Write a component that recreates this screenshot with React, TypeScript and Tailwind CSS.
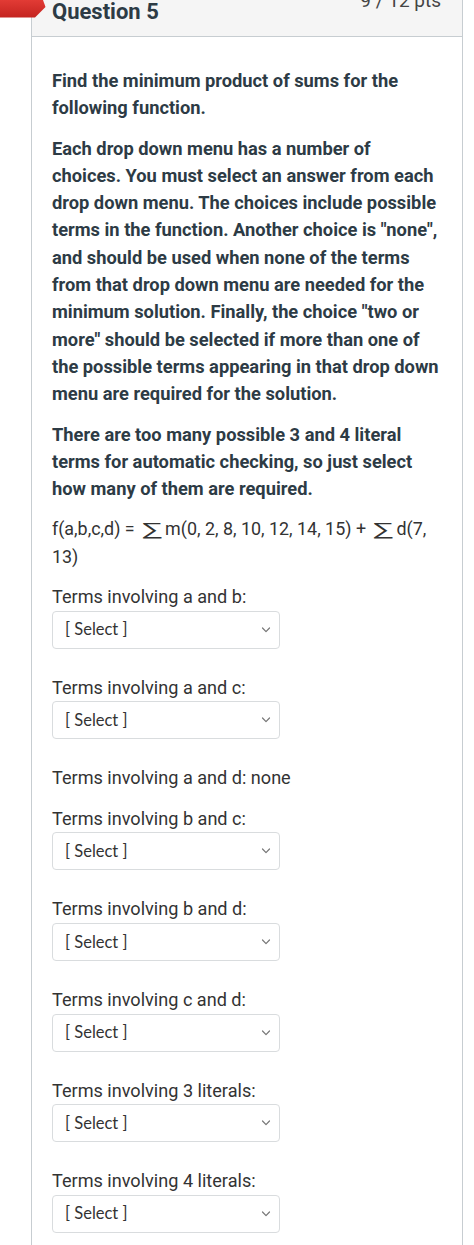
import React from 'react'

const TERMS: { label: string; none?: boolean }[] = [
  { label: 'Terms involving a and b:' },
  { label: 'Terms involving a and c:' },
  { label: 'Terms involving a and d: none', none: true },
  { label: 'Terms involving b and c:' },
  { label: 'Terms involving b and d:' },
  { label: 'Terms involving c and d:' },
  { label: 'Terms involving 3 literals:' },
  { label: 'Terms involving 4 literals:' },
]

function SelectBox() {
  return (
    <div className="w-[228px] h-[38px] border border-[#d9dcde] rounded-[4px] bg-white flex items-center justify-between pl-[12px] pr-[8px] mb-[25px]">
      <span className="text-[16.5px] text-[#333] font-['Lato',sans-serif]">[ Select ]</span>
      <svg width="10" height="6" viewBox="0 0 10 6" fill="none" stroke="#777" strokeWidth={1.2} strokeLinecap="round" strokeLinejoin="round">
        <polyline points="1.5 1 5 4.6 8.5 1" />
      </svg>
    </div>
  )
}

function Sigma() {
  return (
    <span className="inline-block w-[26px] text-center font-['DejaVu_Sans',sans-serif] text-[17px] leading-none font-light scale-x-[1.9]">
      ∑
    </span>
  )
}

export default function App() {
  return (
    <div className="w-[474px] h-[1245px] bg-white overflow-hidden font-['Roboto',sans-serif] text-[#2d3b45] relative">
      {/* red flag on the left */}
      <svg className="absolute left-0 top-0 z-10" width="46" height="18" viewBox="0 0 46 18">
        <defs>
          <linearGradient id="flag" x1="0" y1="0" x2="0" y2="1">
            <stop offset="0" stopColor="#e23b35" />
            <stop offset="1" stopColor="#c42420" />
          </linearGradient>
        </defs>
        <polygon points="0,0 43,0 45.5,7 35,17.5 0,17.5" fill="url(#flag)" />
      </svg>

      <div className="ml-[31px] w-[432px] min-h-[1245px] border-x border-[#c7cdd1]">
        <div className="h-[37px] bg-[#f5f5f5] border-b border-[#c7cdd1] flex items-start justify-between pl-[20px] pr-[21px]">
          <h2 className="text-[22px] leading-[26px] font-bold text-[#2d3b45] -mt-[1px]">Question 5</h2>
          <span className="text-[19px] leading-[22px] text-[#444] -mt-[10px]">9 / 12 pts</span>
        </div>

        <div className="pl-[20px] pr-[22px] pt-[30px]">
          <p className="text-[18.3px] leading-[27.3px] font-bold mb-[13px]">
            Find the minimum product of sums for the following function.
          </p>
          <p className="text-[18.3px] leading-[27.3px] font-bold mb-[13px]">
            Each drop down menu has a number of choices. You must select an answer from each drop down menu. The
            choices include possible terms in the function. Another choice is "none", and should be used when none of
            the terms from that drop down menu are needed for the minimum solution. Finally, the choice "two or more"
            should be selected if more than one of the possible terms appearing in that drop down menu are required
            for the solution.
          </p>
          <p className="text-[18.3px] leading-[27.3px] font-bold mb-[13px]">
            There are too many possible 3 and 4 literal terms for automatic checking, so just select how many of them
            are required.
          </p>
          <p className="text-[17.9px] leading-[27.3px] text-[#333] mb-[13px]">
            f(a,b,c,d) = <Sigma />m(0, 2, 8, 10, 12, 14, 15) + <Sigma />d(7, 13)
          </p>

          {TERMS.map((t) =>
            t.none ? (
              <p key={t.label} className="text-[18.1px] leading-[27.6px] text-[#333] mb-[13px]">
                {t.label}
              </p>
            ) : (
              <div key={t.label}>
                <p className="text-[18.1px] leading-[27.6px] text-[#333]">{t.label}</p>
                <SelectBox />
              </div>
            ),
          )}
        </div>
      </div>
    </div>
  )
}
